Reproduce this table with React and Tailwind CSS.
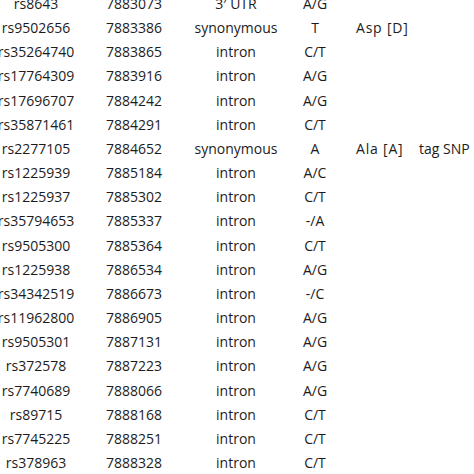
const rows = [
  ["rs8643", "7883073", "3′ UTR", "A/G", "", ""],
  ["rs9502656", "7883386", "synonymous", "T", "Asp [D]", ""],
  ["rs35264740", "7883865", "intron", "C/T", "", ""],
  ["rs17764309", "7883916", "intron", "A/G", "", ""],
  ["rs17696707", "7884242", "intron", "A/G", "", ""],
  ["rs35871461", "7884291", "intron", "C/T", "", ""],
  ["rs2277105", "7884652", "synonymous", "A", "Ala [A]", "tag SNP"],
  ["rs1225939", "7885184", "intron", "A/C", "", ""],
  ["rs1225937", "7885302", "intron", "C/T", "", ""],
  ["rs35794653", "7885337", "intron", "-/A", "", ""],
  ["rs9505300", "7885364", "intron", "C/T", "", ""],
  ["rs1225938", "7886534", "intron", "A/G", "", ""],
  ["rs34342519", "7886673", "intron", "-/C", "", ""],
  ["rs11962800", "7886905", "intron", "A/G", "", ""],
  ["rs9505301", "7887131", "intron", "A/G", "", ""],
  ["rs372578", "7887223", "intron", "A/G", "", ""],
  ["rs7740689", "7888066", "intron", "A/G", "", ""],
  ["rs89715", "7888168", "intron", "C/T", "", ""],
  ["rs7745225", "7888251", "intron", "C/T", "", ""],
  ["rs378963", "7888328", "intron", "C/T", "", ""],
];

export default function App() {
  return (
    <div className="w-[474px] h-[474px] overflow-hidden bg-white text-[#1c1c1c] font-['Open_Sans',sans-serif] text-[14px]">
      <div className="mt-[-8px]">
        {rows.map((r) => (
          <div key={r[0]} className="grid grid-cols-[72px_124px_80px_78px_65px_1fr] h-[24.16px] leading-[24.16px] whitespace-nowrap">
            <div className="flex justify-center">{r[0]}</div>
            <div className="flex justify-center">{r[1]}</div>
            <div className="flex justify-center">{r[2]}</div>
            <div className="flex justify-center">{r[3]}</div>
            <div className="pl-[2px] tracking-[0.8px]">{r[4]}</div>
            <div>{r[5]}</div>
          </div>
        ))}
      </div>
    </div>
  );
}
